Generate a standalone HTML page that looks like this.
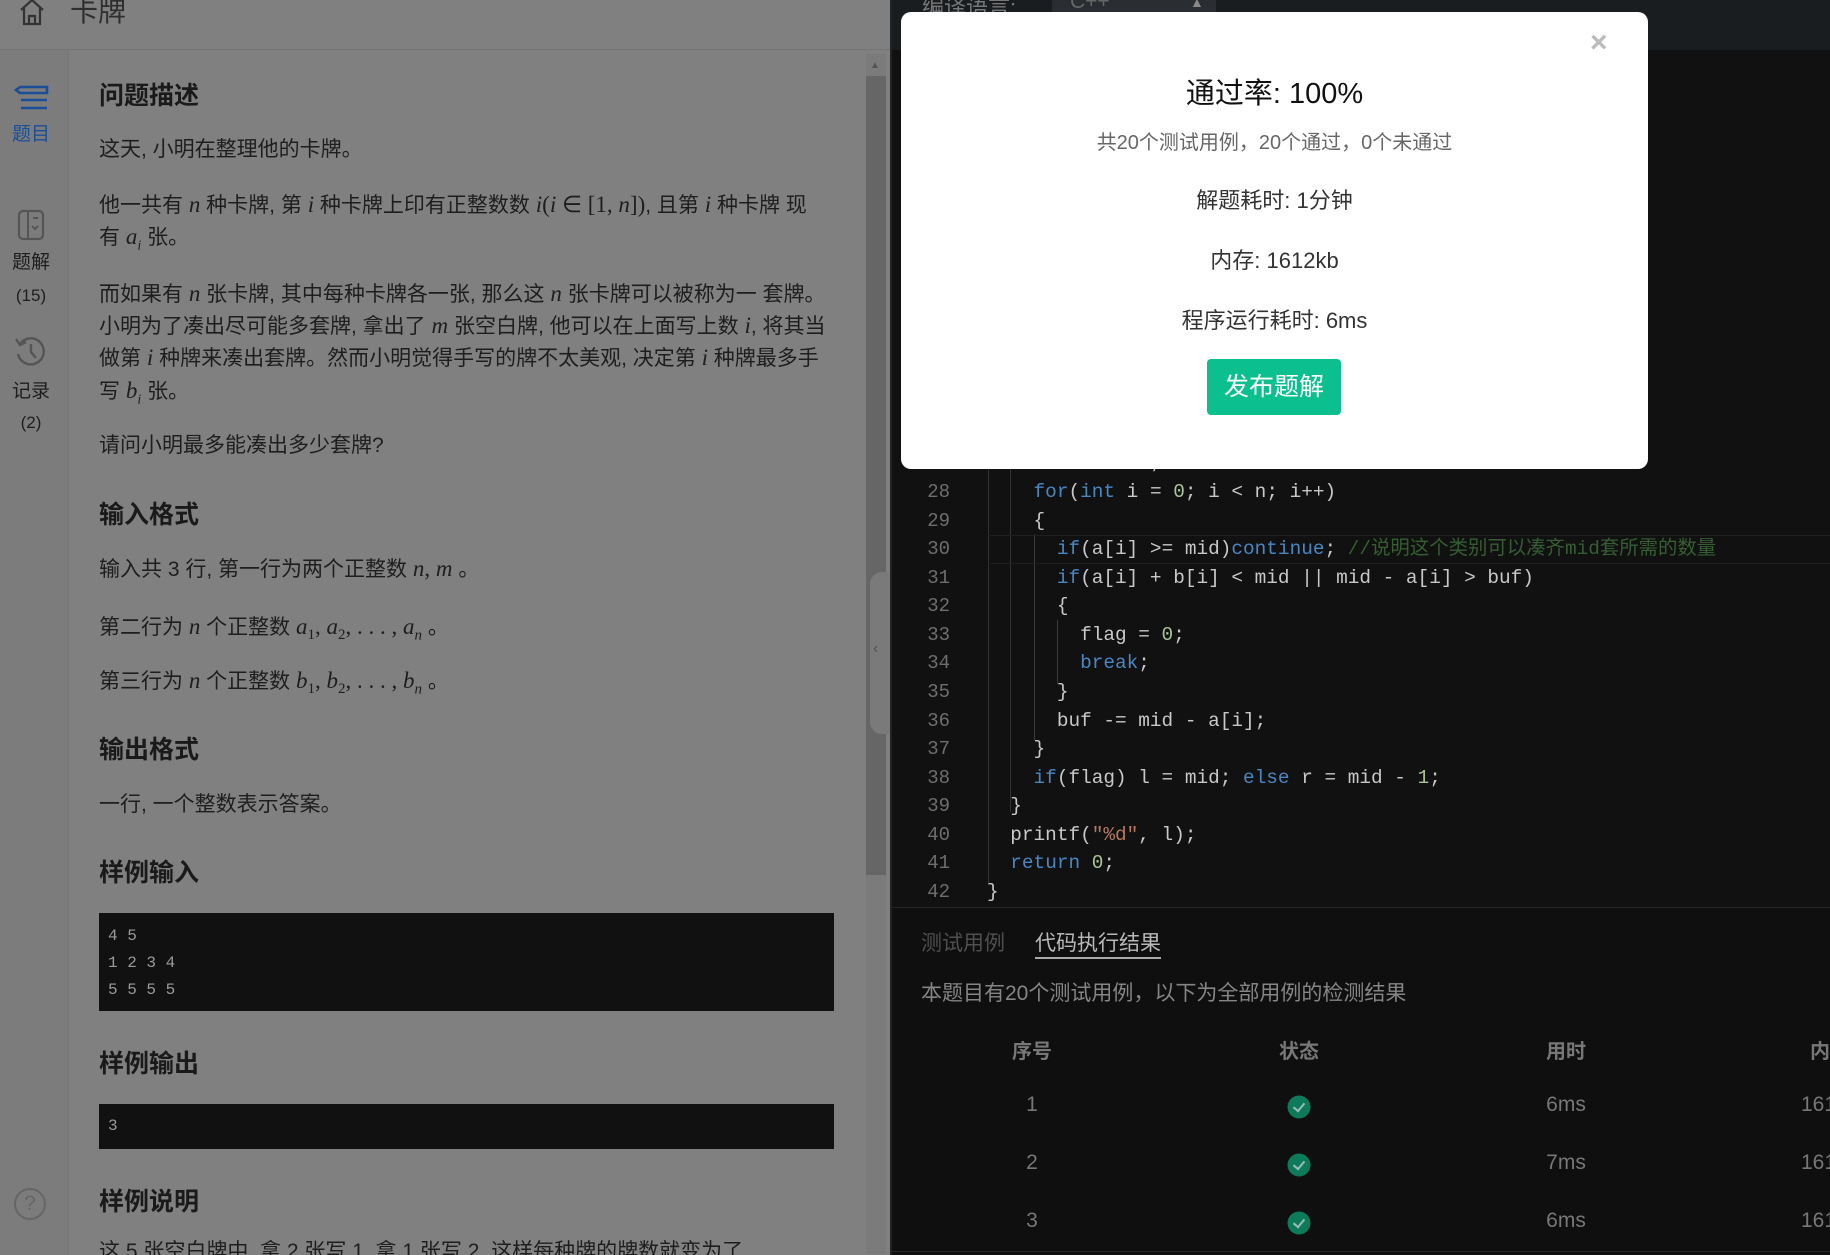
<!DOCTYPE html>
<html><head><meta charset="utf-8">
<style>
*{margin:0;padding:0;box-sizing:border-box}
html,body{width:1830px;height:1255px;overflow:hidden}
body{position:relative;background:#0f0f0f;font-family:"Liberation Sans","Noto Sans CJK SC",sans-serif}
.a{position:absolute;white-space:nowrap}
#left{position:absolute;left:0;top:0;width:890px;height:1255px;background:#808080;overflow:hidden}
.h{font-size:25px;font-weight:bold;color:#1a1a1a;left:99px;line-height:30px}
.p{font-size:21px;color:#1e1e1e;left:99px;line-height:32px}
.m{font-family:"Liberation Serif",serif;font-style:italic;font-size:23px}
.r{font-family:"Liberation Serif",serif;font-size:23px}
.blk{position:absolute;left:99px;width:735px;background:#111;font-family:"Liberation Mono",monospace;color:#9a9a9a;font-size:16px;padding:10px 9px;line-height:27px}
.side{font-size:19px;color:#1e1e1e;text-align:center;width:62px;left:0}
#code{position:absolute;left:890px;top:50px;width:940px;height:858px;background:#111}
.ln{position:absolute;left:900px;width:50px;text-align:right;font-family:"Liberation Mono",monospace;font-size:19px;color:#6e6e6e;line-height:28px}
.cl{position:absolute;left:987px;font-family:"Liberation Mono",monospace;font-size:19.4px;color:#c8c8c8;white-space:pre;line-height:28px}
.k{color:#4a86c2}.n{color:#a9c39a}.c{color:#355e32}.s{color:#b57a5c}
.g{position:absolute;width:1px;background:#333}
.th{font-size:20px;font-weight:bold;color:#777;transform:translateX(-50%)}
.td{font-size:21px;color:#777;transform:translateX(-50%)}
.ck{position:absolute;width:23px;height:23px;border-radius:50%;background:#0d7a5a;transform:translate(-50%,-50%)}
.ck:after{content:"";position:absolute;left:8px;top:5px;width:5px;height:9px;border-right:2px solid #9bb;border-bottom:2px solid #9bb;transform:rotate(40deg)}
#modal{position:absolute;left:901px;top:12px;width:747px;height:457px;background:#fff;border-radius:10px}
.mc{left:0;width:747px;text-align:center}
</style></head><body>
<div id="left">
  <div class="a" style="left:0;top:0;width:890px;height:50px;border-bottom:1px solid #747474;background:#808080"></div>
  <svg class="a" style="left:18px;top:0" width="28" height="26" viewBox="0 0 28 26"><path d="M3 10 L14 0 L25 10 M6 8 V24 H22 V8 M11 24 V16 H17 V24" fill="none" stroke="#333" stroke-width="2.2"/></svg>
  <div class="a" style="left:70px;top:-10px;font-size:28px;color:#2e2e2e">卡牌</div>
  <div class="a" style="left:0;top:50px;width:68px;height:1205px;background:#7c7c7c"></div>
  <div class="a" style="left:68px;top:50px;width:1px;height:1205px;background:#767676"></div>
  <svg class="a" style="left:14px;top:84px" width="36" height="28" viewBox="0 0 36 28"><path d="M6 3 H33 V9 H6 L2 6 Z M7 16 H33 M7 24 H33" fill="none" stroke="#1a4f98" stroke-width="2.6"/></svg>
  <div class="a side" style="top:119px;color:#1a4f98">题目</div>
  <svg class="a" style="left:17px;top:209px" width="28" height="32" viewBox="0 0 28 32"><rect x="2" y="2" width="24" height="28" rx="4" fill="none" stroke="#555" stroke-width="2.2"/><path d="M11 2 V30 M16 9 H21 M15 17 L18 20 L21 17" fill="none" stroke="#555" stroke-width="2"/></svg>
  <div class="a side" style="top:247px">题解</div>
  <div class="a side" style="top:286px;font-size:17px">(15)</div>
  <svg class="a" style="left:14px;top:335px" width="34" height="34" viewBox="0 0 34 34"><path d="M6 9 A13 13 0 1 1 4 19 M2 4 L6 10 L12 7 M17 9 V17 L22 23" fill="none" stroke="#555" stroke-width="2.4"/></svg>
  <div class="a side" style="top:376px">记录</div>
  <div class="a side" style="top:413px;font-size:17px">(2)</div>
  <div class="a" style="left:14px;top:1188px;width:32px;height:32px;border:2px solid #666;border-radius:50%;text-align:center;font-size:21px;color:#666;line-height:28px">?</div>
  <div class="a" style="left:866px;top:54px;width:20px;height:1200px;background:#7b7b7b"></div>
  <div class="a" style="left:870px;top:60px;font-size:10px;color:#555">▲</div>
  <div class="a" style="left:866px;top:76px;width:20px;height:799px;background:#666"></div>
  <div class="a" style="left:870px;top:572px;width:20px;height:162px;background:#7a7a7a;border-radius:12px 0 0 12px"></div>
  <div class="a" style="left:873px;top:640px;font-size:16px;color:#555">‹</div>

  <div class="a h" style="top:81px">问题描述</div>
  <div class="a p" style="top:134px">这天, 小明在整理他的卡牌。</div>
  <div class="a p" style="top:189px">他一共有 <span class="m">n</span> 种卡牌, 第 <span class="m">i</span> 种卡牌上印有正整数数 <span class="m">i</span><span class="r">(</span><span class="m">i</span><span class="r"> ∈ [1, </span><span class="m">n</span><span class="r">])</span>, 且第 <span class="m">i</span> 种卡牌 现</div>
  <div class="a p" style="top:221px">有 <span class="m">a<sub style="font-size:14px">i</sub></span> 张。</div>
  <div class="a p" style="top:278px">而如果有 <span class="m">n</span> 张卡牌, 其中每种卡牌各一张, 那么这 <span class="m">n</span> 张卡牌可以被称为一 套牌。</div>
  <div class="a p" style="top:310px">小明为了凑出尽可能多套牌, 拿出了 <span class="m">m</span> 张空白牌, 他可以在上面写上数 <span class="m">i</span>, 将其当</div>
  <div class="a p" style="top:342px">做第 <span class="m">i</span> 种牌来凑出套牌。然而小明觉得手写的牌不太美观, 决定第 <span class="m">i</span> 种牌最多手</div>
  <div class="a p" style="top:375px">写 <span class="m">b<sub style="font-size:14px">i</sub></span> 张。</div>
  <div class="a p" style="top:430px">请问小明最多能凑出多少套牌?</div>
  <div class="a h" style="top:500px">输入格式</div>
  <div class="a p" style="top:553px">输入共 3 行, 第一行为两个正整数 <span class="m">n</span><span class="r">, </span><span class="m">m</span> 。</div>
  <div class="a p" style="top:611px">第二行为 <span class="m">n</span> 个正整数 <span class="m">a</span><sub class="r" style="font-size:15px">1</sub><span class="r">, </span><span class="m">a</span><sub class="r" style="font-size:15px">2</sub><span class="r">, . . . , </span><span class="m">a<sub style="font-size:15px">n</sub></span> 。</div>
  <div class="a p" style="top:665px">第三行为 <span class="m">n</span> 个正整数 <span class="m">b</span><sub class="r" style="font-size:15px">1</sub><span class="r">, </span><span class="m">b</span><sub class="r" style="font-size:15px">2</sub><span class="r">, . . . , </span><span class="m">b<sub style="font-size:15px">n</sub></span> 。</div>
  <div class="a h" style="top:735px">输出格式</div>
  <div class="a p" style="top:789px">一行, 一个整数表示答案。</div>
  <div class="a h" style="top:858px">样例输入</div>
  <div class="blk" style="top:913px;height:98px">4 5<br>1 2 3 4<br>5 5 5 5</div>
  <div class="a h" style="top:1049px">样例输出</div>
  <div class="blk" style="top:1104px;height:45px;line-height:25px">3</div>
  <div class="a h" style="top:1187px">样例说明</div>
  <div class="a p" style="top:1236px">这 5 张空白牌中, 拿 2 张写 1, 拿 1 张写 2, 这样每种牌的牌数就变为了</div>
</div>

<div class="a" style="left:890px;top:0;width:940px;height:50px;background:#1a1d20"></div>
<div class="a" style="left:922px;top:-10px;font-size:22px;color:#777">编译语言:</div>
<div class="a" style="left:1052px;top:0;width:164px;height:16px;background:#2a2e32"></div>
<div class="a" style="left:1070px;top:-10px;font-size:21px;color:#666">C++</div>
<div class="a" style="left:1190px;top:-6px;font-size:14px;color:#888">▲</div>
<div id="code"></div>
<div class="g" style="left:988px;top:450px;height:435px"></div>
<div class="g" style="left:1010px;top:450px;height:362px"></div>
<div class="g" style="left:1034px;top:534px;height:206px;background:#3a3a3a"></div>
<div class="g" style="left:1057px;top:620px;height:64px;background:#3a3a3a"></div>
<div class="a" style="left:988px;top:535px;width:842px;height:29px;border-top:1px solid #1f1f1f;border-bottom:1px solid #1f1f1f"></div>
<div class="ln" style="top:449px">27</div>
<div class="cl" style="top:449px">    ll buf = m;</div>
<div class="ln" style="top:478px">28</div><div class="cl" style="top:478px">    <span class="k">for</span>(<span class="k">int</span> i = <span class="n">0</span>; i &lt; n; i++)</div>
<div class="ln" style="top:507px">29</div><div class="cl" style="top:507px">    {</div>
<div class="ln" style="top:535px">30</div><div class="cl" style="top:535px">      <span class="k">if</span>(a[i] &gt;= mid)<span class="k">continue</span>; <span class="c">//说明这个类别可以凑齐mid套所需的数量</span></div>
<div class="ln" style="top:564px">31</div><div class="cl" style="top:564px">      <span class="k">if</span>(a[i] + b[i] &lt; mid || mid - a[i] &gt; buf)</div>
<div class="ln" style="top:592px">32</div><div class="cl" style="top:592px">      {</div>
<div class="ln" style="top:621px">33</div><div class="cl" style="top:621px">        flag = <span class="n">0</span>;</div>
<div class="ln" style="top:649px">34</div><div class="cl" style="top:649px">        <span class="k">break</span>;</div>
<div class="ln" style="top:678px">35</div><div class="cl" style="top:678px">      }</div>
<div class="ln" style="top:707px">36</div><div class="cl" style="top:707px">      buf -= mid - a[i];</div>
<div class="ln" style="top:735px">37</div><div class="cl" style="top:735px">    }</div>
<div class="ln" style="top:764px">38</div><div class="cl" style="top:764px">    <span class="k">if</span>(flag) l = mid; <span class="k">else</span> r = mid - <span class="n">1</span>;</div>
<div class="ln" style="top:792px">39</div><div class="cl" style="top:792px">  }</div>
<div class="ln" style="top:821px">40</div><div class="cl" style="top:821px">  printf(<span class="s">"%d"</span>, l);</div>
<div class="ln" style="top:849px">41</div><div class="cl" style="top:849px">  <span class="k">return</span> <span class="n">0</span>;</div>
<div class="ln" style="top:878px">42</div><div class="cl" style="top:878px">}</div>

<div class="a" style="left:890px;top:907px;width:940px;height:1px;background:#262626"></div>
<div class="a" style="left:921px;top:927px;font-size:21px;color:#4f4f4f">测试用例</div>
<div class="a" style="left:1035px;top:927px;font-size:21px;color:#b8b8b8">代码执行结果</div>
<div class="a" style="left:1035px;top:957px;width:126px;height:2px;background:#aaa"></div>
<div class="a" style="left:921px;top:977px;font-size:21px;color:#858585">本题目有20个测试用例，以下为全部用例的检测结果</div>
<div class="a th" style="left:1032px;top:1035px">序号</div>
<div class="a th" style="left:1299px;top:1035px">状态</div>
<div class="a th" style="left:1566px;top:1035px">用时</div>
<div class="a" style="left:1810px;top:1035px;font-size:20px;font-weight:bold;color:#777">内存</div>
<div class="a td" style="left:1032px;top:1093px">1</div><div class="ck" style="left:1299px;top:1107px"></div><div class="a td" style="left:1566px;top:1093px">6ms</div><div class="a" style="left:1801px;top:1093px;font-size:21px;color:#777">1612kb</div>
<div class="a td" style="left:1032px;top:1151px">2</div><div class="ck" style="left:1299px;top:1165px"></div><div class="a td" style="left:1566px;top:1151px">7ms</div><div class="a" style="left:1801px;top:1151px;font-size:21px;color:#777">1612kb</div>
<div class="a td" style="left:1032px;top:1209px">3</div><div class="ck" style="left:1299px;top:1223px"></div><div class="a td" style="left:1566px;top:1209px">6ms</div><div class="a" style="left:1801px;top:1209px;font-size:21px;color:#777">1612kb</div>
<div class="a" style="left:890px;top:1251px;width:940px;height:1px;background:#262626"></div>
<div class="a" style="left:890px;top:0;width:2px;height:1255px;background:#222"></div>

<div id="modal">
  <div class="a" style="left:689px;top:14px;font-size:30px;font-weight:bold;color:#bbb">×</div>
  <div class="a mc" style="top:58px;font-size:29px;color:#111">通过率: 100%</div>
  <div class="a mc" style="top:114px;font-size:20px;color:#666">共20个测试用例，20个通过，0个未通过</div>
  <div class="a mc" style="top:171px;font-size:22px;color:#333">解题耗时: 1分钟</div>
  <div class="a mc" style="top:231px;font-size:22px;color:#333">内存: 1612kb</div>
  <div class="a mc" style="top:291px;font-size:22px;color:#333">程序运行耗时: 6ms</div>
  <div class="a" style="left:306px;top:347px;width:134px;height:56px;background:#0bc08e;border-radius:4px;color:#fff;font-size:25px;text-align:center;line-height:56px">发布题解</div>
</div>
</body></html>
